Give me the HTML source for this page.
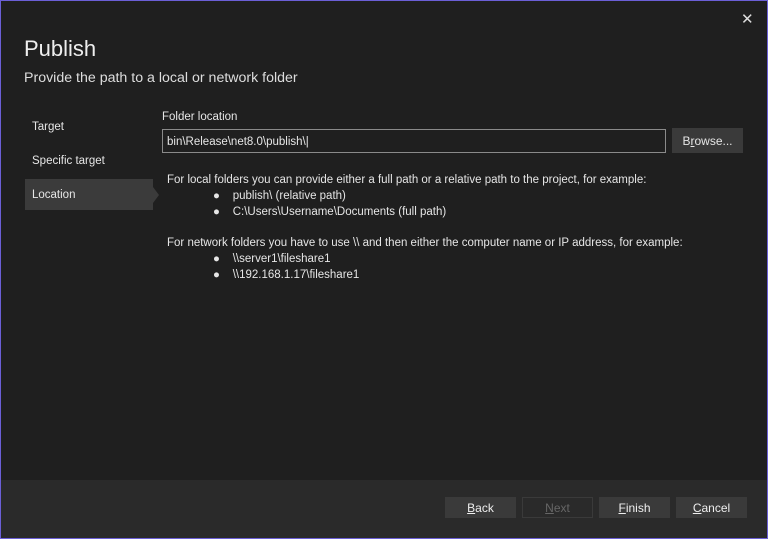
<html><head><style>
body{margin:0;width:768px;height:539px;overflow:hidden;background:#1f1f1f;font-family:"Liberation Sans",sans-serif;color:#e6e6e6;position:relative}
.b{position:absolute;left:0;top:0;width:766px;height:537px;border:1px solid #6b5fd6}
div{position:absolute}
.t{font-size:11.5px;white-space:nowrap}
.btn{background:#3a3a3a;top:497px;width:71px;height:21px;text-align:center;font-size:12px;line-height:21px;color:#eee}
u{text-decoration:underline}
</style></head><body>
<div style="left:1px;top:480px;width:766px;height:58px;background:#2a2a2a"></div>
<div class="b"></div>
<div style="left:741px;top:10px;font-size:15px;color:#ddd">✕</div>
<div style="left:24px;top:36px;font-size:22px;color:#eee">Publish</div>
<div style="left:24px;top:70px;font-size:14.2px;color:#ddd">Provide the path to a local or network folder</div>
<div class="t" style="left:32px;top:121px">Target</div>
<div class="t" style="left:32px;top:155px">Specific target</div>
<div style="left:25px;top:179px;width:128px;height:31px;background:#3b3b3b"></div>
<div style="left:153px;top:187px;width:0;height:0;border-top:8px solid transparent;border-bottom:8px solid transparent;border-left:6px solid #3b3b3b"></div>
<div class="t" style="left:32px;top:189px">Location</div>
<div class="t" style="left:162px;top:111px">Folder location</div>
<div style="left:162px;top:129px;width:502px;height:22px;border:1px solid #8a8a8a;background:#1f1f1f"></div>
<div class="t" style="left:167px;top:136px">bin\Release\net8.0\publish\|</div>
<div style="left:672px;top:128px;width:71px;height:25px;background:#3a3a3a;font-size:12px;line-height:26px;text-align:center">B<u>r</u>owse...</div>
<div class="t" style="left:167px;top:174px">For local folders you can provide either a full path or a relative path to the project, for example:</div>
<div class="t" style="left:213px;top:190px">●&nbsp;&nbsp;&nbsp;&nbsp;publish\ (relative path)</div>
<div class="t" style="left:213px;top:206px">●&nbsp;&nbsp;&nbsp;&nbsp;C:\Users\Username\Documents (full path)</div>
<div class="t" style="left:167px;top:237px">For network folders you have to use \\ and then either the computer name or IP address, for example:</div>
<div class="t" style="left:213px;top:253px">●&nbsp;&nbsp;&nbsp;&nbsp;\\server1\fileshare1</div>
<div class="t" style="left:213px;top:269px">●&nbsp;&nbsp;&nbsp;&nbsp;\\192.168.1.17\fileshare1</div>
<div class="btn" style="left:445px;line-height:22px"><u>B</u>ack</div>
<div class="btn" style="left:522px;background:#2a2a2a;border:1px solid #3a3a3a;width:69px;height:19px;line-height:20px;color:#666"><u>N</u>ext</div>
<div class="btn" style="left:599px;line-height:22px"><u>F</u>inish</div>
<div class="btn" style="left:676px;line-height:22px"><u>C</u>ancel</div>
</body></html>
